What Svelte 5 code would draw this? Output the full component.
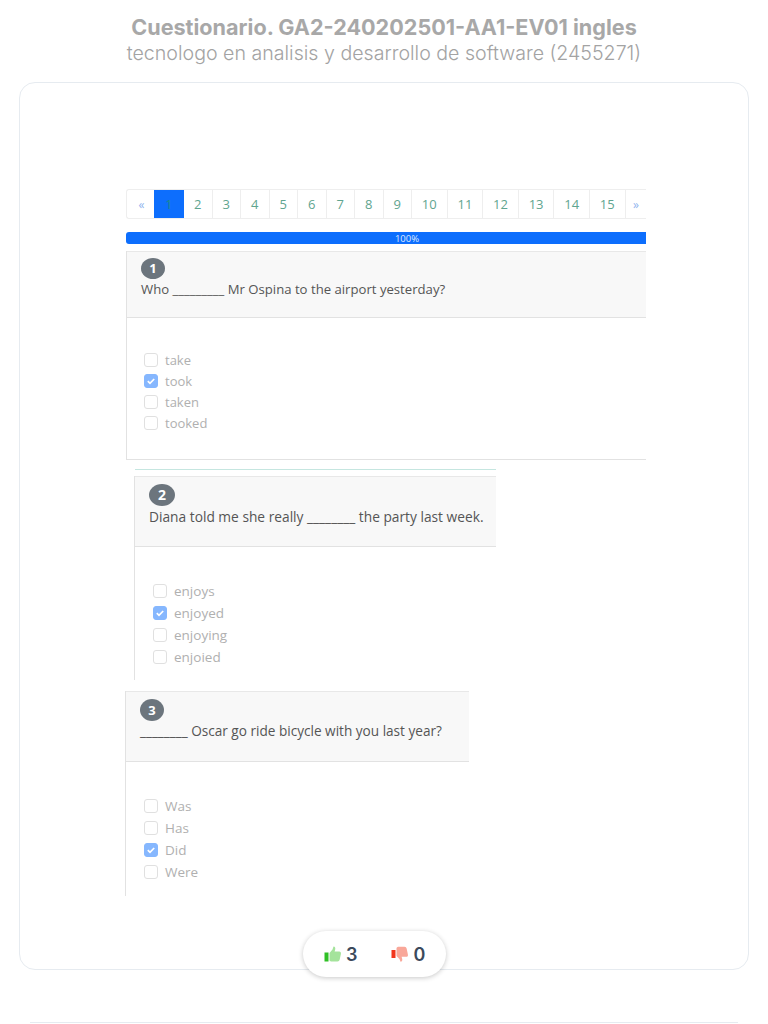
<script>
  const pages = [1, 2, 3, 4, 5, 6, 7, 8, 9, 10, 11, 12, 13, 14, 15]

  const questions = [
    {
      num: 1,
      cls: 'q1',
      text: 'Who _________ Mr Ospina to the airport yesterday?',
      options: ['take', 'took', 'taken', 'tooked'],
      answer: 'took'
    },
    {
      num: 2,
      cls: 'q2',
      text: 'Diana told me she really ________ the party last week.',
      options: ['enjoys', 'enjoyed', 'enjoying', 'enjoied'],
      answer: 'enjoyed'
    },
    {
      num: 3,
      cls: 'q3',
      text: '________ Oscar go ride bicycle with you last year?',
      options: ['Was', 'Has', 'Did', 'Were'],
      answer: 'Did'
    }
  ]
</script>

<div class="page">
  <header class="head">
    <h1>Cuestionario. GA2-240202501-AA1-EV01 ingles</h1>
    <p>tecnologo en analisis y desarrollo de software (2455271)</p>
  </header>

  <main class="card">
    <nav class="pager">
      <span class="pg arrow first">«</span>
      {#each pages as p}
        <span class="pg" class:active={p === 1} class:wide={p > 9}>{p}</span>
      {/each}
      <span class="pg arrow last">»</span>
    </nav>

    <div class="progress">100%</div>

    {#each questions as q}
      <section class="question {q.cls}">
        <div class="q-head">
          <span class="badge">{q.num}</span>
          <div class="q-text">{q.text}</div>
        </div>
        <ul class="options">
          {#each q.options as opt}
            <li>
              <span class="box" class:checked={opt === q.answer}>
                {#if opt === q.answer}
                  <svg viewBox="0 0 14 14" width="14" height="14">
                    <path d="M3.800 7.200l2.200 2.200 4.200-4.400" fill="none" stroke="#fff" stroke-width="1.700" />
                  </svg>
                {/if}
              </span>
              {opt}
            </li>
          {/each}
        </ul>
      </section>
    {/each}

    <div class="votes">
      <span class="vote">
        <svg viewBox="0 0 18 16" width="18" height="16">
          <rect x="0.500" y="6.500" width="4" height="9" fill="#2fc025" />
          <path d="M5.500 7 8.500 3.500 9.500 0.500c1.600 0 2.200 1.600 1.600 3.400l-.5 1.600h4.600c1.400 0 2 1.200 1.700 2.400l-1.200 5.600c-.3 1.200-1 1.900-2.200 1.900H8c-1.200 0-2-.4-2.500-1z" fill="#a4e39b" />
        </svg>
        3
      </span>
      <span class="vote">
        <svg viewBox="0 0 18 16" width="18" height="16">
          <rect x="0.500" y="4" width="4" height="8" fill="#f2361d" />
          <path d="M5.500 10 8.500 13l1 2.700c1.600 0 2.200-1.500 1.600-3.300l-.5-1.600h4.600c1.400 0 2-1.200 1.700-2.400l-1.200-5.600C15.400 1.600 14.700.8 13.500.8H8C6.800.8 6 1.200 5.500 1.900z" fill="#f9a799" />
        </svg>
        0
      </span>
    </div>
  </main>

  <hr class="rule" />
</div>

<style>
  :global(body) {
    margin: 0;
    background: #fff;
  }

  .page {
    width: 768px;
    height: 1024px;
    overflow: hidden;
    font-family: 'Open Sans', 'Liberation Sans', sans-serif;
  }

  .head {
    height: 82px;
    padding-top: 14px;
    box-sizing: border-box;
    text-align: center;
    font-family: Inter, 'Open Sans', sans-serif;
  }

  .head h1 {
    margin: 0;
    font-size: 21.600px;
    line-height: 26px;
    font-weight: 700;
    color: #a8a8a8;
  }

  .head p {
    margin: 0;
    font-size: 19.600px;
    line-height: 27px;
    font-weight: 300;
    color: #a3a3a3;
  }

  .card {
    position: relative;
    box-sizing: border-box;
    height: 888px;
    margin: 0 19px;
    padding-top: 106px;
    border: 1px solid #e6ebf0;
    border-radius: 16px;
  }

  .pager {
    display: flex;
    width: 520px;
    height: 30px;
    margin-left: 106px;
    overflow: hidden;
    box-sizing: border-box;
    border: 1px solid #eee;
    border-right: 0;
    border-radius: 3px 0 0 3px;
  }

  .pg {
    flex: none;
    width: 28.500px;
    display: flex;
    align-items: center;
    justify-content: center;
    box-sizing: border-box;
    border-right: 1px solid #eee;
    font-size: 13px;
    color: #5fa590;
  }

  .pg.wide {
    width: 35.600px;
  }

  .pg.first {
    width: 28px;
    padding-left: 2px;
    margin-right: -1px;
  }

  .pg.active {
    width: 30px;
    background: #0d6efd;
    color: #1f8a8a;
    border-right: 0;
  }

  .pg.arrow {
    color: #8fb4ee;
    font-size: 12px;
  }

  .pg.last {
    border-right: 0;
    width: 21px;
  }

  .progress {
    box-sizing: border-box;
    width: 520px;
    height: 12px;
    margin: 13px 0 7px 106px;
    padding-left: 42px;
    background: #0d6efd;
    border-radius: 3px 0 0 3px;
    color: #dfeaff;
    font-size: 9.500px;
    line-height: 14px;
    text-align: center;
  }

  .question {
    box-sizing: border-box;
    border-left: 1px solid #e2e2e2;
    color: #555;
  }

  .q-head {
    box-sizing: border-box;
    background: #f8f8f8;
    border-top: 1px solid #e8e8e8;
    border-bottom: 1px solid #e2e2e2;
  }

  .q-text {
    white-space: nowrap;
  }

  .badge {
    display: block;
    border-radius: 50%;
    background: #6c757d;
    color: #fff;
    font-weight: 700;
    text-align: center;
  }

  .options {
    list-style: none;
    margin: 0;
    padding: 0;
    color: #b0b0b0;
  }

  .options li {
    display: flex;
    align-items: center;
  }

  .box {
    flex: none;
    box-sizing: border-box;
    width: 14px;
    height: 14px;
    border: 1px solid #e0e0e0;
    border-radius: 3px;
    background: #fff;
  }

  .box.checked {
    background: #86b7fe;
    border-color: #86b7fe;
  }

  .box svg {
    display: block;
    margin: -1px;
  }

  /* the three questions are pasted at slightly different sizes */
  .q1 {
    width: 520px;
    height: 209px;
    margin-left: 106px;
    border-bottom: 1px solid #e2e2e2;
    font-size: 13.150px;
  }

  .q1 .q-head {
    height: 67px;
    padding: 6px 14px 0;
  }

  .q1 .badge {
    width: 24px;
    height: 21px;
    font-size: 13px;
    line-height: 21px;
    margin-bottom: 1px;
  }

  .q1 .q-text {
    line-height: 18px;
  }

  .q1 .options {
    padding: 31px 0 0 17px;
    font-size: 13px;
  }

  .q1 .options li {
    height: 21px;
    gap: 7px;
  }

  .q2 {
    position: relative;
    width: 362px;
    height: 204px;
    margin: 16px 0 0 114px;
    font-size: 13.750px;
  }

  .q2::before {
    content: '';
    position: absolute;
    top: -7px;
    left: 0;
    width: 100%;
    height: 1px;
    background: #c5e6e0;
  }

  .q2 .q-head {
    height: 71px;
    padding: 7px 14px 0;
  }

  .q2 .badge {
    width: 26px;
    height: 22px;
    font-size: 14px;
    line-height: 22px;
    margin-bottom: 1px;
  }

  .q2 .q-text {
    line-height: 20px;
  }

  .q2 .options {
    padding: 33px 0 0 18px;
    font-size: 13.500px;
  }

  .q2 .options li {
    height: 22px;
    gap: 7px;
  }

  .q3 {
    width: 344px;
    height: 205px;
    margin: 11px 0 0 105px;
    font-size: 13.600px;
  }

  .q3 .q-head {
    height: 71px;
    padding: 7px 14px 0;
  }

  .q3 .badge {
    width: 24px;
    height: 22px;
    font-size: 13px;
    line-height: 22px;
  }

  .q3 .q-text {
    line-height: 20px;
  }

  .q3 .options {
    padding: 33px 0 0 18px;
    font-size: 13.500px;
  }

  .q3 .options li {
    height: 22px;
    gap: 7px;
  }

  .votes {
    position: absolute;
    left: 283px;
    bottom: -8px;
    box-sizing: border-box;
    width: 143px;
    height: 46px;
    display: flex;
    align-items: center;
    gap: 34px;
    padding-left: 21px;
    background: #fff;
    border-radius: 23px;
    box-shadow: 0 1px 5px rgba(0, 0, 0, 0.22);
  }

  .vote {
    display: flex;
    align-items: center;
    gap: 4px;
    font-family: Inter, 'Open Sans', sans-serif;
    font-size: 18px;
    font-weight: 600;
    color: #3c4a5c;
  }

  .rule {
    margin: 52px 30px 0;
    border: 0;
    border-top: 1px solid #e6ebf0;
  }
</style>
